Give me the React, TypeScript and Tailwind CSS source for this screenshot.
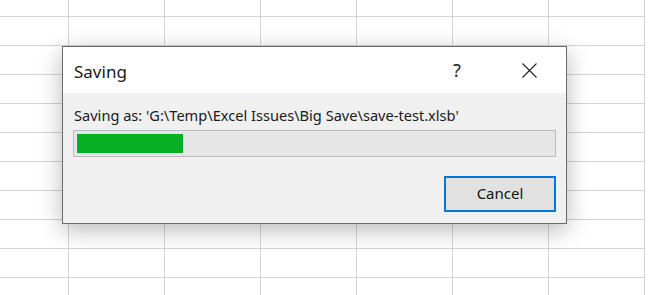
const cols = [0, 1, 2, 3, 4, 5, 6];
const rows = [0, 1, 2, 3, 4, 5, 6, 7, 8, 9, 10];

const SheetGrid = () => {
    return (
        <div className="flex flex-col">
            {rows.map((r) => (
                <div key={r} className={`flex ${r === 0 ? "h-[17px]" : "h-[29px]"}`}>
                    {cols.map((c) => (
                        <div
                            key={c}
                            className={`${c === 0 ? "w-[69px]" : "w-[96px]"} shrink-0 border-r border-b border-[#d4d4d4]`}
                        />
                    ))}
                </div>
            ))}
        </div>
    );
};

const SavingDialog = () => {
    return (
        <div className="absolute left-[62px] top-[46px] w-[505px] h-[178px] border border-[#6b6b6b] bg-[#f0f0f0] flex flex-col shadow-[0_6px_22px_rgba(0,0,0,0.28)] font-['Noto_Sans',sans-serif] text-[#1a1a1a]">
            {/* Title bar */}
            <div className="h-[46px] bg-white flex items-center pl-[11px] shrink-0">
                <div className="text-[17px] leading-none flex-1 pt-[2px]">Saving</div>
                <div className="w-[20px] flex justify-center text-[18px] leading-none text-[#222] mr-[55px]">?</div>
                <svg width="15" height="15" viewBox="0 0 15 15" className="mr-[29px]">
                    <path d="M0.5 0.5L14.5 14.5M14.5 0.5L0.5 14.5" stroke="#222" strokeWidth="1.1" fill="none" />
                </svg>
            </div>

            {/* Body */}
            <div className="flex-1 flex flex-col px-[10px]">
                <div className="text-[14.6px] leading-none pl-[1px] mt-[15px] whitespace-nowrap">
                    Saving as: 'G:\Temp\Excel Issues\Big Save\save-test.xlsb'
                </div>
                <div className="mt-[7px] h-[27px] border border-[#bcbcbc] bg-[#e6e6e6] p-[3px]">
                    <div className="h-full w-[106px] bg-[#06b025]" />
                </div>
                <div className="flex justify-end mt-[19px]">
                    <button className="w-[112px] h-[36px] border-2 border-[#0078d7] bg-[#e1e1e1] text-[15px] leading-none text-[#111]">
                        Cancel
                    </button>
                </div>
            </div>
        </div>
    );
};

export default function App() {
    return (
        <div className="relative w-[649px] h-[295px] overflow-hidden bg-white">
            <SheetGrid />
            <SavingDialog />
        </div>
    );
}
